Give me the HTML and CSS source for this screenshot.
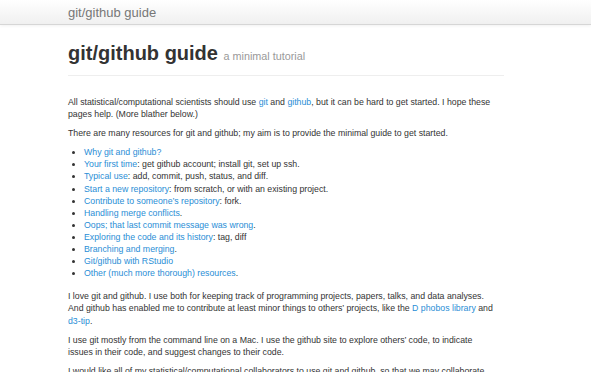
FILE: index.html
```html
<!DOCTYPE html>
<html lang="en">
<head>
    <meta charset="UTF-8">
    <meta name="viewport" content="width=device-width, initial-scale=1.0">
    <title>git/github guide</title>
    <link rel="stylesheet" href="styles.css">
</head>
<body>

    <div class="navbar">
        <a class="brand" href="#">git/github guide</a>
    </div>

    <div class="container">
        <div class="page-header">
            <h1>git/github guide <small>a minimal tutorial</small></h1>
        </div>

        <p>All statistical/computational scientists should use <a href="#">git</a> and <a href="#">github</a>, but it can be hard to get started. I hope these pages help. (More blather below.)</p>

        <p>There are many resources for git and github; my aim is to provide the minimal guide to get started.</p>

        <ul>
            <li><a href="#">Why git and github?</a></li>
            <li><a href="#">Your first time</a>: get github account; install git, set up ssh.</li>
            <li><a href="#">Typical use</a>: add, commit, push, status, and diff.</li>
            <li><a href="#">Start a new repository</a>: from scratch, or with an existing project.</li>
            <li><a href="#">Contribute to someone’s repository</a>: fork.</li>
            <li><a href="#">Handling merge conflicts</a>.</li>
            <li><a href="#">Oops; that last commit message was wrong</a>.</li>
            <li><a href="#">Exploring the code and its history</a>: tag, diff</li>
            <li><a href="#">Branching and merging</a>.</li>
            <li><a href="#">Git/github with RStudio</a></li>
            <li><a href="#">Other (much more thorough) resources</a>.</li>
        </ul>

        <p>I love git and github. I use both for keeping track of programming projects, papers, talks, and data analyses. And github has enabled me to contribute at least minor things to others’ projects, like the <a href="#">D phobos library</a> and <a href="#">d3-tip</a>.</p>

        <p>I use git mostly from the command line on a Mac. I use the github site to explore others’ code, to indicate issues in their code, and suggest changes to their code.</p>

        <p>I would like all of my statistical/computational collaborators to use git and github, so that we may collaborate more effectively.</p>
    </div>

</body>
</html>
```

FILE: styles.css
```css
/* Basic Reset */
* {
    margin: 0;
    padding: 0;
    box-sizing: border-box;
}

body {
    font-family: 'Liberation Sans', Arial, sans-serif;
    font-size: 8.75px;
    line-height: 12.1px;
    color: #333;
    background-color: #fff;
}

a {
    color: #2a8ed6;
    text-decoration: none;
}

.navbar {
    height: 25px;
    background: linear-gradient(#ffffff, #f0f0f0);
    border-bottom: 1px solid #d6d6d6;
    box-shadow: 0 1px 3px rgba(0, 0, 0, 0.06);
    padding-left: 68px;
}

.navbar .brand {
    display: block;
    font-size: 13px;
    line-height: 26px;
    color: #777;
}

.container {
    width: 426px;
    margin-left: 68px;
}

.page-header {
    padding: 16px 0 7px;
    border-bottom: 1px solid #eee;
    margin: 0 -10px 20px 0; /* rule runs a bit past the text */
}

.page-header h1 {
    font-size: 20px;
    line-height: 24px;
    font-weight: bold;
    color: #333;
}

.page-header small {
    font-size: 10.8px;
    font-weight: normal;
    color: #999;
}

p {
    margin-bottom: 7px;
}

ul {
    margin: 0 0 11px 16px;
}
```
